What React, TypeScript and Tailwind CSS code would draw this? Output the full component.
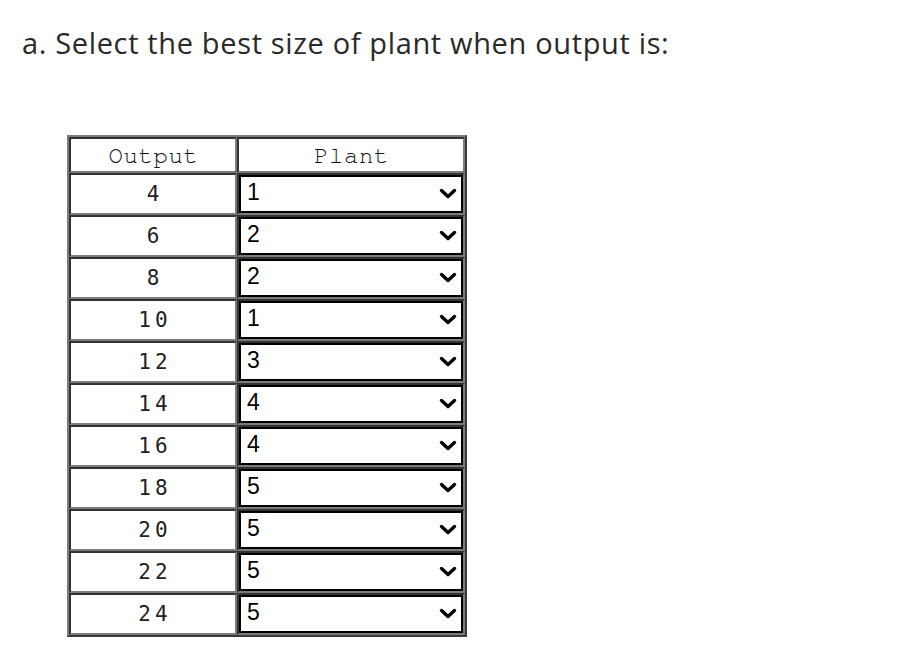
import React from 'react';

const rows: [number, number][] = [
  [4, 1],
  [6, 2],
  [8, 2],
  [10, 1],
  [12, 3],
  [14, 4],
  [16, 4],
  [18, 5],
  [20, 5],
  [22, 5],
  [24, 5],
];

const Chevron: React.FC = () => (
  <svg width="18" height="12" viewBox="0 0 18 12" className="shrink-0">
    <polyline points="2.5,2.5 9,8.5 15.5,2.5" fill="none" stroke="#000" strokeWidth="3.4" strokeLinecap="round" strokeLinejoin="round" />
  </svg>
);

const PlantSelect: React.FC<{ value: number }> = ({ value }) => (
  <div className="h-[38px] w-full border-2 border-black bg-white flex items-center justify-between pl-[6px] pr-[4px]">
    <span className="text-[23px] leading-none -mt-[3px] text-black font-[family-name:Liberation_Sans,Arial,sans-serif]">{value}</span>
    <Chevron />
  </div>
);

const headCell =
  'p-0 pt-[2px] pl-[1px] font-normal leading-[22px] border-2 border-t-[#333] border-l-[#333] border-r-[#7b7b7b] border-b-[#7b7b7b] text-[24px] tracking-[0.6px] text-[#111] font-[family-name:Nimbus_Mono_PS,FreeMono,Courier,Liberation_Mono,monospace]';

export default function App() {
  return (
    <div className="w-[920px] h-[660px] bg-white">
      <h1 className="pl-[22px] pt-[24px] text-[29px] leading-[38px] tracking-[0.65px] text-[#2a2a2a] font-['Open_Sans',sans-serif]">
        a. Select the best size of plant when output is:
      </h1>

      <table className="ml-[67px] mt-[73px] w-[400px] border-separate border-spacing-0 border-2 border-t-[#7b7b7b] border-l-[#7b7b7b] border-r-[#3a3a3a] border-b-[#3a3a3a]">
        <thead>
          <tr>
            <th className={`w-[168px] h-[36px] ${headCell}`}>Output</th>
            <th className={headCell}>Plant</th>
          </tr>
        </thead>
        <tbody>
          {rows.map(([out, plant]) => (
            <tr key={out}>
              <td className="h-[42px] p-0 pt-[1px] pl-[4px] text-center border-2 border-t-[#333] border-l-[#333] border-r-[#7b7b7b] border-b-[#7b7b7b] text-[21px] tracking-[4px] text-[#222] font-[family-name:DejaVu_Sans_Mono,monospace]">
                {out}
              </td>
              <td className="p-0 border-2 border-t-[#333] border-l-[#333] border-r-[#7b7b7b] border-b-[#7b7b7b]">
                <PlantSelect value={plant} />
              </td>
            </tr>
          ))}
        </tbody>
      </table>
    </div>
  );
}
